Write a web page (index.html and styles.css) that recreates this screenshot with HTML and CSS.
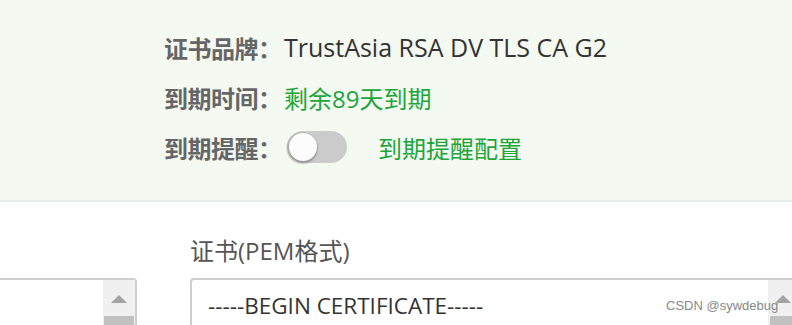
FILE: index.html
```html
<!DOCTYPE html>
<html lang="zh">
<head>
<meta charset="utf-8">
<link rel="stylesheet" href="styles.css">
</head>
<body>
<div class="info">
  <div class="row"><span class="label">证书品牌：</span><span class="value">TrustAsia RSA DV TLS CA G2</span></div>
  <div class="row"><span class="label">到期时间：</span><span class="value green">剩余89天到期</span></div>
  <div class="row"><span class="label">到期提醒：</span><span class="switch"><span class="knob"></span></span><span class="value green">到期提醒配置</span></div>
</div>
<div class="editors">
  <div class="col left">
    <div class="box small">
      <div class="text"></div>
      <div class="scroll"><div class="arrow"></div><div class="thumb"></div></div>
    </div>
  </div>
  <div class="col right">
    <div class="title">证书(PEM格式)</div>
    <div class="box big">
      <div class="text">-----BEGIN CERTIFICATE-----</div>
      <div class="scroll"><div class="arrow"></div><div class="thumb"></div></div>
    </div>
  </div>
</div>
<div class="watermark">CSDN @sywdebug</div>
</body>
</html>
```
FILE: styles.css
```css
html, body { margin: 0; padding: 0; }
body {
  width: 792px; height: 325px; overflow: hidden; position: relative;
  background: #fff;
  font-family: "Open Sans", "Noto Sans CJK SC", sans-serif;
}
.info {
  height: 202px; box-sizing: border-box;
  background: #f4f9f2;
  border-bottom: 2px solid #e4eeec;
  padding: 22px 0 0 164px;
  display: flex; flex-direction: column;
}
.row { height: 50px; display: flex; align-items: center; }
.label {
  width: 120px; font-size: 24px; font-weight: bold; color: #666;
  font-family: "Noto Sans CJK SC", sans-serif; letter-spacing: -0.5px;
}
.value { font-size: 25px; color: #333; }
.green { color: #20a53a; font-size: 24px; }
.switch {
  width: 60px; height: 32px; border-radius: 16px; background: #cbcbcb;
  position: relative; margin: 0 31px 0 3px; flex-shrink: 0;
}
.knob {
  position: absolute; left: 2px; top: 2px; width: 28px; height: 28px; border-radius: 50%;
  background: #fcfcfc; box-shadow: -1px 1px 0 2px rgba(0,0,0,0.1), 0 2px 3px rgba(0,0,0,0.2);
}
.editors { display: flex; padding-top: 32px; height: 123px; box-sizing: border-box; overflow: hidden; }
.col.left { width: 137px; padding-top: 44px; }
.col.right { margin-left: 53px; flex: 1; }
.title { font-size: 24px; color: #555; height: 44px; line-height: 34px; }
.box {
  border: 2px solid #cfcfcf; border-bottom: none; border-radius: 4px; background: #fff;
  height: 47px; display: flex; box-sizing: border-box;
}
.box.small { border-left: none; border-radius: 0 4px 0 0; }
.box.big { border-right: none; border-radius: 4px 0 0 0; }
.text { flex: 1; padding: 9px 0 0 16px; font-size: 22.5px; color: #333; line-height: 34px; white-space: nowrap; overflow: hidden; }
.scroll { width: 32px; background: #f0f0f0; display: flex; flex-direction: column; align-items: center; }
.box.big .scroll { width: 24px; align-items: flex-start; padding-left: 7px; box-sizing: border-box; }
.arrow {
  width: 0; height: 0; margin-top: 15px;
  border-left: 8px solid transparent; border-right: 8px solid transparent; border-bottom: 8px solid #a3a3a3;
}
.thumb { margin-top: 13px; width: 30px; flex: 1; background: #c1c1c1; }
.box.big .thumb { margin-left: -5px; }
.watermark {
  position: absolute; left: 666px; top: 298px; font-size: 13px; color: #888;
  font-family: "Liberation Sans", sans-serif;
}
```
